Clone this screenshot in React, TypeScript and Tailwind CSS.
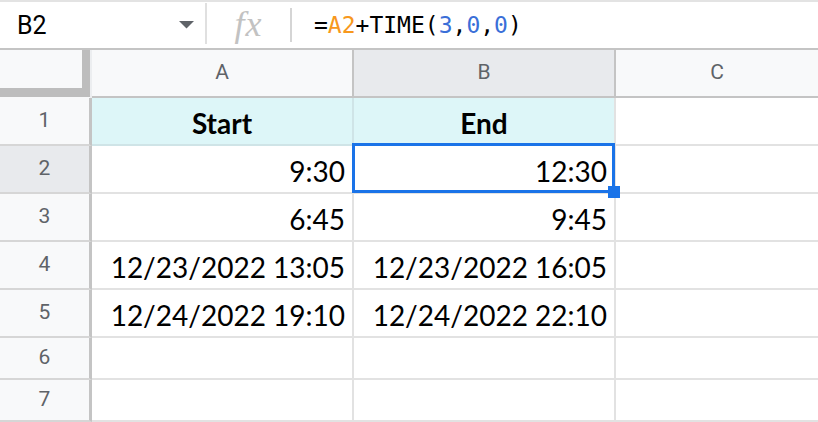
import React from 'react';

const rows = [
    { n: 1, a: 'Start', b: 'End', head: true },
    { n: 2, a: '9:30', b: '12:30' },
    { n: 3, a: '6:45', b: '9:45' },
    { n: 4, a: '12/23/2022 13:05', b: '12/23/2022 16:05' },
    { n: 5, a: '12/24/2022 19:10', b: '12/24/2022 22:10' },
    { n: 6, a: '', b: '' },
    { n: 7, a: '', b: '' },
];

const cellFont = { fontFamily: 'Lato, "Open Sans", sans-serif' };

export default function App() {
    return (
        <div className="w-[818px] h-[422px] overflow-hidden bg-white" style={{ fontFamily: 'Roboto, Arial, sans-serif' }}>
            {/* Formula bar */}
            <div className="flex h-[50px] border-t-2 border-t-[#e3e3e3] border-b-2 border-b-[#c4c4c4]">
                <div className="flex w-[205px] items-center justify-between pl-[17px] pr-[11px]">
                    <span className="text-[25px] text-black leading-none">B2</span>
                    <svg width="15" height="8" viewBox="0 0 15 8">
                        <path d="M0 0 L15 0 L7.5 7.5 Z" fill="#5f6368" />
                    </svg>
                </div>
                <div className="w-[2px] mt-[1px] h-[41px] bg-[#e0e0e0]" />
                <div className="flex w-[83px] items-center justify-center">
                    <span
                        className="italic text-[36px] text-[#c2c2c2] leading-none -mt-[3px] tracking-[1px]"
                        style={{ fontFamily: '"Liberation Serif", "DejaVu Serif", serif' }}
                    >
                        fx
                    </span>
                </div>
                <div className="w-[2px] mt-[6px] h-[34px] bg-[#d5d5d5]" />
                <div
                    className="flex items-center pl-[22px] text-[23px] text-black"
                    style={{ fontFamily: '"DejaVu Sans Mono", "Liberation Mono", monospace' }}
                >
                    <span>=</span>
                    <span className="text-[#f7981d]">A2</span>
                    <span>+TIME(</span>
                    <span className="text-[#3a6fd8]">3</span>
                    <span>,</span>
                    <span className="text-[#3a6fd8]">0</span>
                    <span>,</span>
                    <span className="text-[#3a6fd8]">0</span>
                    <span>)</span>
                </div>
            </div>

            {/* Grid */}
            <div className="grid grid-cols-[92px_262px_262px_202px] text-[21px] text-[#5f6368]">
                {/* Column headers */}
                <div className="h-[48px] bg-[#f8f9fa] border-r-2 border-r-[#eceef0]">
                    <div className="h-[38px] w-[82px] box-content border-r-[8px] border-b-[9px] border-[#bdbdbd]" />
                </div>
                <div className="h-[48px] flex items-center justify-center bg-[#f8f9fa] border-r-2 border-b-2 border-[#c4c4c4]">A</div>
                <div className="h-[48px] flex items-center justify-center bg-[#e8eaed] border-r-2 border-b-2 border-[#c4c4c4]">B</div>
                <div className="h-[48px] flex items-center justify-center bg-[#f8f9fa] border-b-2 border-[#c4c4c4]">C</div>

                {rows.map(r => {
                    const h = r.n <= 5 ? 'h-[48px]' : 'h-[42px]';
                    const headBg = r.n === 2 ? 'bg-[#e8eaed]' : 'bg-[#f8f9fa]';
                    const dataBg = r.head ? 'bg-[#ddf6f8]' : 'bg-white';
                    const align = r.head ? 'justify-center font-bold' : 'justify-end pr-[7px]';
                    return (
                        <React.Fragment key={r.n}>
                            <div className={`${h} ${headBg} flex items-center justify-center border-r-[3px] border-r-[#c4c4c4] border-b-2 border-b-[#d6d6d6]`}>
                                {r.n}
                            </div>
                            <div
                                className={`${h} ${dataBg} ${align} flex items-center pt-[3px] text-[28px] text-black border-r-2 border-b-2 ${r.head ? 'border-[#cfe4e7]' : 'border-[#e2e2e2]'}`}
                                style={cellFont}
                            >
                                {r.a}
                            </div>
                            <div
                                className={`${h} ${dataBg} ${align} relative flex items-center pt-[3px] text-[28px] text-black border-r-2 border-b-2 border-[#e2e2e2]`}
                                style={cellFont}
                            >
                                {r.b}
                                {r.n === 2 && (
                                    <>
                                        <div className="absolute z-10 -left-[2px] -top-[3px] w-[263px] h-[50px] border-[3px] border-[#1a73e8]" />
                                        <div className="absolute z-10 left-[254px] top-[40px] w-[12px] h-[12px] bg-[#1a73e8]" />
                                    </>
                                )}
                            </div>
                            <div className={`${h} bg-white border-b-2 border-[#e2e2e2]`} />
                        </React.Fragment>
                    );
                })}
            </div>
        </div>
    );
}
